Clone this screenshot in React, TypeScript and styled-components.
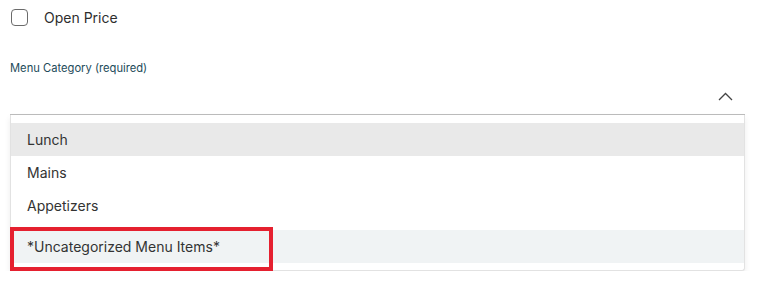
import { createGlobalStyle } from "styled-components";
import styled from "styled-components";

const GlobalStyle = createGlobalStyle`
  html, body {
    margin: 0;
    padding: 0;
    background: #ffffff;
  }
  body {
    font-family: "Inter", "Liberation Sans", Arial, sans-serif;
    color: #333333;
    -webkit-font-smoothing: antialiased;
  }
`;

const options = ["Lunch", "Mains", "Appetizers"];

const App = () => {
  return (
    <>
      <GlobalStyle />
      <Page>
        <CheckRow>
          <CheckBox type="checkbox" />
          <CheckLabel>Open Price</CheckLabel>
        </CheckRow>

        <FieldLabel>Menu Category (required)</FieldLabel>
        <SelectField>
          <svg width="15" height="9" viewBox="0 0 15 9" fill="none">
            <path d="M1 8 L7.5 1.5 L14 8" stroke="#444" strokeWidth="1.3" />
          </svg>
        </SelectField>

        <Panel>
          {options.map((o, i) => (
            <Option key={o} $active={i === 0}>
              {o}
            </Option>
          ))}
          <Group>
            <Option $muted>*Uncategorized Menu Items*</Option>
            {/* annotation box */}
            <Highlight />
          </Group>
        </Panel>
      </Page>
    </>
  );
};

const Page = styled.div`
  padding: 0 30px 0 10px;
`;

const CheckRow = styled.div`
  display: flex;
  align-items: center;
  gap: 16px;
  height: 35px;
`;

const CheckBox = styled.input`
  appearance: none;
  margin: 0 0 0 1px;
  width: 17px;
  height: 17px;
  border: 1.5px solid #6b6b6b;
  border-radius: 4px;
  background: #fff;
  box-sizing: border-box;
`;

const CheckLabel = styled.span`
  font-size: 14px;
  color: #2e2e2e;
`;

const FieldLabel = styled.div`
  margin-top: 25px;
  font-size: 11.2px;
  line-height: 16px;
  color: #1d4b5a;
`;

const SelectField = styled.div`
  height: 39px;
  display: flex;
  align-items: center;
  justify-content: flex-end;
  padding-right: 12px;
  padding-top: 3px;
  border-bottom: 1px solid #bdbdbd;
  box-sizing: border-box;
`;

const Panel = styled.div`
  border: 1px solid #e2e2e2;
  border-top: none;
  border-radius: 0 0 3px 3px;
  padding: 8px 0 7px;
  box-shadow: 0 3px 6px rgba(0, 0, 0, 0.08);
  background: #fff;
`;

const Option = styled.div<{ $active?: boolean; $muted?: boolean }>`
  height: 33px;
  display: flex;
  align-items: center;
  padding-left: 16px;
  font-size: 14px;
  color: #333;
  background: ${(p) => (p.$active ? "#e9e9e9" : p.$muted ? "#f0f3f4" : "transparent")};
`;

const Group = styled.div`
  position: relative;
  margin-top: 8px;
`;

const Highlight = styled.div`
  position: absolute;
  left: -1px;
  top: -3px;
  width: 263px;
  height: 44px;
  border: 4px solid #e5202f;
  box-sizing: border-box;
`;

export default App;
